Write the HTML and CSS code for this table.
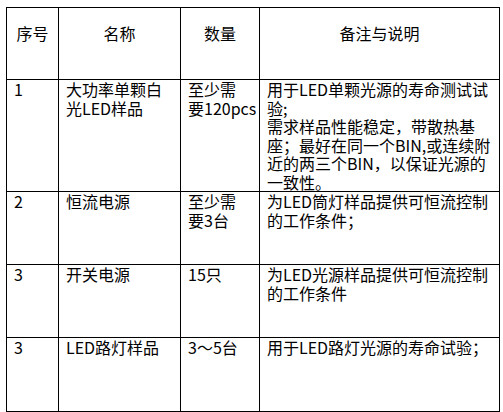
FILE: index.html
```html
<!DOCTYPE html>
<html lang="zh-CN">
<head>
<meta charset="utf-8">
<title>样品清单</title>
<link rel="stylesheet" href="styles.css">
</head>
<body>
<table class="sheet">
  <colgroup>
    <col class="c-no">
    <col class="c-name">
    <col class="c-qty">
    <col class="c-note">
  </colgroup>
  <thead>
    <tr class="r-head">
      <th>序号</th>
      <th>名称</th>
      <th>数量</th>
      <th>备注与说明</th>
    </tr>
  </thead>
  <tbody>
    <tr class="r-1">
      <td>1</td>
      <td>大功率单颗白<br>光LED样品</td>
      <td>至少需<br>要120pcs</td>
      <td>用于LED单颗光源的寿命测试试<br>验;<br>需求样品性能稳定，带散热基<br>座；最好在同一个BIN,或连续附<br>近的两三个BIN，以保证光源的<br>一致性。</td>
    </tr>
    <tr class="r-2">
      <td>2</td>
      <td>恒流电源</td>
      <td>至少需<br>要3台</td>
      <td>为LED筒灯样品提供可恒流控制<br>的工作条件；</td>
    </tr>
    <tr class="r-3">
      <td>3</td>
      <td>开关电源</td>
      <td>15只</td>
      <td>为LED光源样品提供可恒流控制<br>的工作条件</td>
    </tr>
    <tr class="r-4">
      <td>3</td>
      <td>LED路灯样品</td>
      <td>3～5台</td>
      <td>用于LED路灯光源的寿命试验；</td>
    </tr>
  </tbody>
</table>
</body>
</html>
```

FILE: styles.css
```css
html, body {
  margin: 0;
  padding: 0;
  background: #ffffff;
}

body {
  font-family: "Noto Sans CJK SC", "Noto Sans", sans-serif;
  font-size: 16px;
  color: #000000;
}

.sheet {
  margin: 7px 0 0 6px;
  border-collapse: collapse;
  table-layout: fixed;
  width: 493px;
}

.c-no { width: 52px; }
.c-name { width: 122px; }
.c-qty { width: 79px; }
.c-note { width: 240px; }

.sheet th,
.sheet td {
  border: 1px solid #000000;
  padding: 0 6px 0 7px;
  line-height: 18.5px;
  vertical-align: top;
  text-align: left;
  white-space: nowrap;
  overflow: visible;
  font-weight: normal;
}

.sheet th {
  text-align: center;
  padding-top: 16px;
  padding-left: 0;
  padding-right: 0;
}

.r-head { height: 72px; }
.r-1 { height: 108px; }
.r-2 { height: 73px; }
.r-3 { height: 73px; }
.r-4 { height: 74px; }
```
